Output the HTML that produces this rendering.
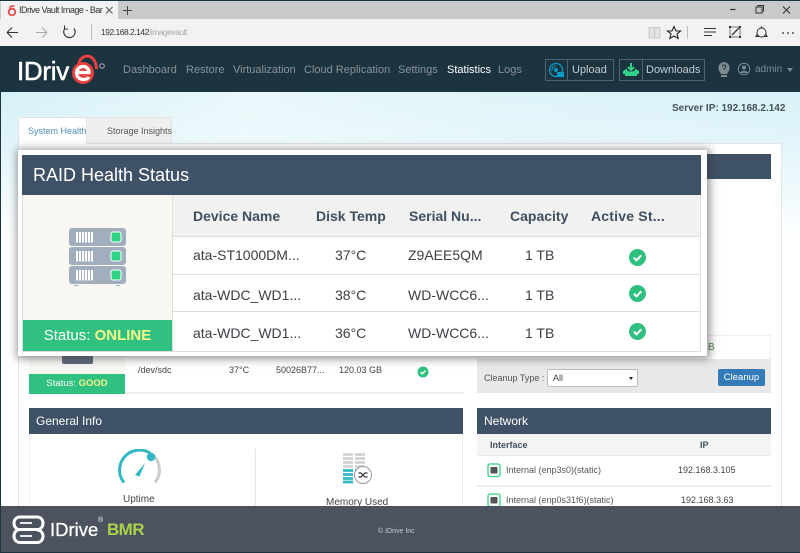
<!DOCTYPE html>
<html><head><meta charset="utf-8"><title>IDrive Vault Image - Bar</title>
<style>
*{box-sizing:border-box}
html,body{margin:0;padding:0;width:800px;height:553px;overflow:hidden;background:#fff;font-family:"Liberation Sans",sans-serif}
.a{position:absolute;white-space:nowrap}
#root{position:relative;width:800px;height:553px;overflow:hidden}
.nav{top:63px;font-size:11px;color:#8b9297;line-height:14px}
.ph{background:#3e5166;color:#fff}
.th{font-weight:bold;font-size:14px;color:#3f4f60;top:208px;line-height:16px}
.td{font-size:14px;color:#3a3f45;line-height:16px}
.sm{font-size:9px;color:#444;line-height:10px}
.line{background:#ddd;height:1px}
</style></head><body><div id="root">
<!-- browser chrome -->
<div class="a" style="left:0;top:0;width:800px;height:1px;background:#1b3440"></div>
<div class="a" style="left:0;top:1px;width:800px;height:18px;background:#c9c9c9"></div>
<div class="a" style="left:1px;top:1px;width:117px;height:18px;background:#f2f2f2"></div>
<svg class="a" style="left:6px;top:4px" width="12" height="13" viewBox="0 0 12 13"><path d="M8.500 2.500A3 3 0 0 0 4 3.500L3.500 7" fill="none" stroke="#e8484a" stroke-width="1.600"/><circle cx="6" cy="8" r="3.300" fill="none" stroke="#e8484a" stroke-width="1.800"/></svg>
<div class="a" style="left:19px;top:4px;font-size:9px;letter-spacing:-.5px;line-height:12px;color:#333">IDrive Vault Image - Bar</div>
<svg class="a" style="left:104px;top:5px" width="10" height="10"><path d="M2 2L8.500 8.500M8.500 2L2 8.500" stroke="#555" stroke-width="1"/></svg>
<svg class="a" style="left:122px;top:5px" width="11" height="11"><path d="M5.500 1V10M1 5.500H10" stroke="#444" stroke-width="1"/></svg>
<svg class="a" style="left:725px;top:3px" width="70" height="13"><path d="M5 6.500H10.500" stroke="#333" stroke-width="1.200"/><rect x="31" y="4" width="6" height="6" fill="none" stroke="#333"/><path d="M33 4V2.500H38.500V8H37" fill="none" stroke="#333"/><path d="M58 3.500L65 10.500M65 3.500L58 10.500" stroke="#333" stroke-width="1.100"/></svg>
<div class="a" style="left:0;top:19px;width:800px;height:27px;background:#f2f2f2"></div>
<svg class="a" style="left:4px;top:24px" width="80" height="17" viewBox="0 0 80 17"><path d="M3 8.500H14M3 8.500L8 3.500M3 8.500L8 13.500" fill="none" stroke="#333" stroke-width="1.100"/><path d="M32 8.500H43M43 8.500L38 3.500M43 8.500L38 13.500" fill="none" stroke="#aaa" stroke-width="1.100"/><path d="M61 4.300A5.700 5.700 0 1 0 70 4.500M60.500 1.500V5H64" fill="none" stroke="#333" stroke-width="1.100"/></svg>
<div class="a" style="left:91px;top:24px;width:1px;height:16px;background:#bbb"></div>
<div class="a" style="left:101px;top:26px;font-size:8.500px;letter-spacing:-.5px;line-height:12px;color:#333">192.168.2.142<span style="color:#aaa">/imagevault</span></div>
<svg class="a" style="left:647px;top:24px" width="150" height="17" viewBox="0 0 150 17"><path d="M2 3.500H7.500V14H2ZM7.500 3.500H13V14H7.500Z" fill="#e4e4e4" stroke="#c8c8c8"/><path d="M27 2.500L29 7H33.500L30 10L31.200 14.500L27 12L22.800 14.500L24 10L20.500 7H25Z" fill="none" stroke="#222" stroke-width="1.100"/><path d="M40.500 2V14.500" stroke="#bbb"/><path d="M57 4.500H69M57 8H69M57 11.500H65" stroke="#333" stroke-width="1.100"/><rect x="83" y="3" width="10" height="10" fill="none" stroke="#777"/><path d="M85 11L92 4" stroke="#333" stroke-width="1.300"/><g fill="#333"><rect x="82" y="2" width="2" height="2"/><rect x="92" y="2" width="2" height="2"/><rect x="82" y="12" width="2" height="2"/><rect x="92" y="12" width="2" height="2"/></g><path d="M114.500 3L120 12.500H109Z" fill="none" stroke="#333" stroke-width="1.100"/><circle cx="114.500" cy="8.500" r="4.500" fill="#f2f2f2" stroke="#333"/><path d="M135 9h2M140 9h2M145 9h2" stroke="#333" stroke-width="1.200"/></svg>
<!-- app header -->
<div class="a" style="left:0;top:46px;width:800px;height:46px;background:#1b3440"></div>
<div class="a" style="left:17px;top:57px;font-size:26px;line-height:28px;color:#fff;letter-spacing:-.3px;-webkit-text-stroke:.5px #fff">IDriv</div>
<svg class="a" style="left:71px;top:52px" width="36" height="36" viewBox="0 0 36 36"><path d="M7.500 13C9 1 25 0 25.500 17" fill="none" stroke="#e8403e" stroke-width="3"/><circle cx="12" cy="21" r="11" fill="#e8403e"/><path d="M6 20.500H18C18 17 15.500 14.500 12 14.500S5.500 17.500 5.500 21 8.500 27.500 12.500 27.500C15 27.500 17 26.500 18 25" fill="none" stroke="#fff" stroke-width="3.200"/><circle cx="31" cy="14" r="2.300" fill="none" stroke="#aab" stroke-width="1"/></svg>
<div class="a nav" style="left:123px">Dashboard</div>
<div class="a nav" style="left:186px">Restore</div>
<div class="a nav" style="left:233px">Virtualization</div>
<div class="a nav" style="left:304px">Cloud Replication</div>
<div class="a nav" style="left:398px">Settings</div>
<div class="a nav" style="left:447px;color:#fff">Statistics</div>
<div class="a nav" style="left:498px">Logs</div>
<div class="a" style="left:545px;top:59px;width:69px;height:22px;border:1px solid #4f636e"></div>
<div class="a" style="left:567px;top:59px;width:1px;height:22px;background:#4f636e"></div>
<svg class="a" style="left:548px;top:62px" width="17" height="17" viewBox="0 0 17 17"><circle cx="8" cy="8" r="6.500" fill="none" stroke="#0a9bc8" stroke-width="1.300"/><circle cx="8" cy="8" r="2" fill="#0a9bc8"/><path d="M4 9A4 4 0 0 1 8 4" stroke="#0a9bc8" fill="none"/><rect x="9" y="10" width="7" height="5" fill="#0a9bc8"/></svg>
<div class="a" style="left:572px;top:63px;font-size:11px;line-height:14px;color:#c4cbcf">Upload</div>
<div class="a" style="left:619px;top:59px;width:86px;height:22px;border:1px solid #4f636e"></div>
<div class="a" style="left:642px;top:59px;width:1px;height:22px;background:#4f636e"></div>
<svg class="a" style="left:622px;top:62px" width="18" height="16" viewBox="0 0 18 16"><path d="M9 1V7M6 5L9 8L12 5" fill="none" stroke="#2fd286" stroke-width="2"/><path d="M1 9L5 6.500V8C5 10 13 10 13 8V6.500L17 9V12H1Z" fill="#2fd286"/><path d="M3 13H15" stroke="#2fd286" stroke-width="2"/></svg>
<div class="a" style="left:646px;top:63px;font-size:11px;line-height:14px;color:#c4cbcf">Downloads</div>
<svg class="a" style="left:716px;top:61px" width="16" height="17" viewBox="0 0 16 17"><path d="M8 1A6 6 0 0 0 4.500 11.500V13H11.500V11.500A6 6 0 0 0 8 1Z" fill="#7d8b91"/><rect x="5" y="14" width="6" height="2" fill="#7d8b91"/><path d="M6.300 5.500C6.300 3.500 9.700 3.500 9.700 5.500C9.700 7 8 7 8 9" fill="none" stroke="#1b3440"/></svg>
<svg class="a" style="left:737px;top:62px" width="14" height="14" viewBox="0 0 14 14"><circle cx="7" cy="7" r="5.700" fill="none" stroke="#7d8b91"/><circle cx="7" cy="5.500" r="2" fill="#7d8b91"/><path d="M3 11C4 8 10 8 11 11Z" fill="#7d8b91"/></svg>
<div class="a" style="left:755px;top:63px;font-size:10px;line-height:13px;color:#7d8b91">admin</div>
<div class="a" style="left:787px;top:68px;border:3.500px solid transparent;border-top:4px solid #7d8b91"></div>
<!-- background -->
<div class="a" style="left:0;top:92px;width:800px;height:150px;background:linear-gradient(to bottom,rgba(255,255,255,0) 0,rgba(255,255,255,.25) 35%,#fff 100%),linear-gradient(100deg,#d6f1f8 0%,#e9f8fb 30%,#dff4f9 60%,#d8f2f9 100%)"></div>
<div class="a" style="left:672px;top:103px;font-size:10px;font-weight:bold;line-height:12px;color:#44525f">Server IP: 192.168.2.142</div>
<div class="a" style="left:18px;top:117px;width:69px;height:27px;background:#fff;border:1px solid #e2e2e2;border-bottom:none"></div>
<div class="a" style="left:87px;top:117px;width:85px;height:27px;background:#efefef;border:1px solid #e2e2e2;border-left:none"></div>
<div class="a" style="left:18px;top:143px;width:764px;height:410px;background:#fff;border:1px solid #e4e4e4"></div>
<div class="a" style="left:19px;top:142px;width:67px;height:3px;background:#fff"></div>
<div class="a" style="left:28px;top:125px;font-size:9px;line-height:12px;color:#4f8fc0">System Health</div>
<div class="a" style="left:107px;top:125px;font-size:9px;line-height:12px;color:#555">Storage Insights</div>
<!-- behind panels -->
<div class="a ph" style="left:477px;top:154px;width:294px;height:25px"></div>
<div class="a" style="left:477px;top:335px;width:294px;height:32px;background:#fff;border:1px solid #eee"></div>
<div class="a" style="left:708px;top:341px;font-size:10px;line-height:13px;color:#3c8a2e">B</div>
<div class="a" style="left:477px;top:359px;width:294px;height:34px;background:#e8e8e8"></div>
<div class="a" style="left:484px;top:372px;font-size:9px;line-height:12px;color:#555">Cleanup Type :</div>
<div class="a" style="left:547px;top:369px;width:91px;height:18px;background:#fff;border:1px solid #bbb;border-radius:2px;font-size:9px;line-height:16px;padding-left:5px;color:#444">All</div>
<div class="a" style="left:629px;top:377px;border:2.500px solid transparent;border-top:3.500px solid #222"></div>
<div class="a" style="left:718px;top:369px;width:47px;height:17px;background:#337ab7;border-radius:2px;color:#fff;font-size:9.500px;line-height:17px;text-align:center">Cleanup</div>
<div class="a" style="left:29px;top:350px;width:435px;height:44px;background:#fff;border-bottom:2px solid #eee"></div>
<div class="a" style="left:29px;top:340px;width:96px;height:34px;background:#f8f7f2"></div>
<div class="a" style="left:62px;top:350px;width:31px;height:14px;background:#5d6a7b;border-radius:0 0 2px 2px"></div>
<div class="a" style="left:29px;top:374px;width:96px;height:20px;background:#30c07f;color:#fff;font-size:9.500px;line-height:20px;text-align:center">Status: <b style="color:#f3f58d">GOOD</b></div>
<div class="a sm" style="left:138px;top:365px">/dev/sdc</div>
<div class="a sm" style="left:229px;top:365px">37°C</div>
<div class="a sm" style="left:276px;top:365px">50026B77...</div>
<div class="a sm" style="left:339px;top:365px">120.03 GB</div>
<svg class="a" style="left:417px;top:366px" width="12" height="12"><circle cx="6" cy="6" r="5.500" fill="#2fbf7e"/><path d="M3.500 6L5.300 7.800L8.500 4.500" fill="none" stroke="#fff" stroke-width="1.400"/></svg>
<div class="a ph" style="left:29px;top:408px;width:434px;height:26px;font-size:12px;line-height:26px;padding-left:7px">General Info</div>
<div class="a" style="left:29px;top:434px;width:434px;height:80px;border:1px solid #eee;border-top:none"></div>
<div class="a" style="left:255px;top:449px;width:1px;height:60px;background:#e6e6e6"></div>
<svg class="a" style="left:117px;top:449px" width="46" height="40" viewBox="0 0 46 40"><path d="M7 33.600A20 20 0 0 1 33.500 4.300" fill="none" stroke="#30b8c4" stroke-width="3"/><path d="M36 6.200A20 20 0 0 1 38 33.600" fill="none" stroke="#ccc" stroke-width="3"/><circle cx="34" cy="8" r="4.200" fill="#30b8c4"/><path d="M28 14L18 26L22.500 27.500Z" fill="#30b8c4"/></svg>
<div class="a" style="left:123px;top:493px;font-size:10px;line-height:13px;color:#444">Uptime</div>
<svg class="a" style="left:342px;top:452px" width="32" height="34" viewBox="0 0 32 34"><path d="M1 2.500H11M13 2.500H23M1 6.500H11M13 6.500H23M1 10.500H11M13 10.500H23M1 14.500H11M13 14.500H23" stroke="#d2d2d2" stroke-width="2.800"/><path d="M1 18.500H11M13 18.500H23M1 22.500H11M1 26.500H11M1 30H11" stroke="#30b8c4" stroke-width="2.800"/><circle cx="21" cy="23" r="8.500" fill="#fff" stroke="#999"/><path d="M16.500 21H19L23 25H25.500M16.500 25H19L23 21H25.500" fill="none" stroke="#333" stroke-width="1.200"/></svg>
<div class="a" style="left:326px;top:496px;font-size:10px;line-height:13px;color:#444">Memory Used</div>
<div class="a ph" style="left:477px;top:408px;width:294px;height:26px;font-size:12px;line-height:26px;padding-left:7px">Network</div>
<div class="a" style="left:477px;top:434px;width:294px;height:22px;background:#f4f4f4;border-bottom:1px solid #e8e8e8"></div>
<div class="a" style="left:490px;top:440px;font-size:9px;font-weight:bold;line-height:11px;color:#3f4f60">Interface</div>
<div class="a" style="left:700px;top:440px;font-size:9px;font-weight:bold;line-height:11px;color:#3f4f60">IP</div>
<div class="a" style="left:477px;top:485px;width:294px;height:2px;background:#f0f0f0"></div>
<svg class="a" style="left:487px;top:463px" width="14" height="45" viewBox="0 0 14 45"><rect x="1" y="1" width="12" height="12.500" rx="2" fill="#fff" stroke="#35d285" stroke-width="1.300"/><rect x="3.500" y="4" width="7" height="6.500" rx="1" fill="#555"/><rect x="1" y="31" width="12" height="12.500" rx="2" fill="#fff" stroke="#35d285" stroke-width="1.300"/><rect x="3.500" y="34" width="7" height="6.500" rx="1" fill="#555"/></svg>
<div class="a" style="left:506px;top:465px;font-size:9px;line-height:11px;color:#555">Internal (enp3s0)(static)</div>
<div class="a" style="left:678px;top:465px;font-size:9px;line-height:11px;color:#444">192.168.3.105</div>
<div class="a" style="left:506px;top:495px;font-size:9px;line-height:11px;color:#555">Internal (enp0s31f6)(static)</div>
<div class="a" style="left:681px;top:495px;font-size:9px;line-height:11px;color:#444">192.168.3.63</div>
<!-- footer -->
<div class="a" style="left:0;top:506px;width:800px;height:46px;background:#4c535e"></div>
<div class="a" style="left:0;top:552px;width:800px;height:1px;background:#1b3440"></div>
<div class="a" style="left:0;top:46px;width:1px;height:507px;background:#1b3440"></div>
<svg class="a" style="left:12px;top:515px" width="34" height="30" viewBox="0 0 34 30"><path d="M8 14.500H25C33 14.500 33 2 25 2H8C0 2 0 14.500 8 14.500C0 14.500 0 27.500 8 27.500H25C33 27.500 33 15 25 15" fill="none" stroke="#fff" stroke-width="3"/><path d="M8 8H20M8 21H20" stroke="#fff" stroke-width="1.800"/></svg>
<div class="a" style="left:50px;top:520px;font-size:18.500px;line-height:20px;color:#fff;-webkit-text-stroke:.3px #fff">IDrive</div>
<div class="a" style="left:98px;top:516px;font-size:7px;line-height:10px;color:#fff">®</div>
<div class="a" style="left:107px;top:520px;font-size:17px;line-height:20px;font-weight:bold;color:#a9d14c;letter-spacing:-.6px">BMR</div>
<div class="a" style="left:378px;top:527px;font-size:7px;line-height:10px;color:#c8ccd0">© IDrive Inc</div>
<!-- modal -->
<div class="a" style="left:18px;top:150px;width:689px;height:206px;background:#fff;box-shadow:1px 1px 8px 2px rgba(60,60,60,.55)"></div>
<div class="a ph" style="left:22px;top:155px;width:679px;height:40px;font-size:18px;line-height:40px;padding-left:11px">RAID Health Status</div>
<div class="a" style="left:22px;top:195px;width:679px;height:157px;border:1px solid #ddd;border-top:none"></div>
<div class="a" style="left:23px;top:195px;width:150px;height:125px;background:#f8f7f2"></div>
<div class="a" style="left:172px;top:195px;width:1px;height:157px;background:#ddd"></div>
<svg class="a" style="left:69px;top:228px" width="58" height="59" viewBox="0 0 58 59"><g id="r1"><rect x="0" y="0" width="57" height="18" rx="3" fill="#a0aebd"/><path d="M8 4V14.500M11 4V14.500M14 4V14.500M17 4V14.500M20 4V14.500M23 4V14.500" stroke="#fff" stroke-width="2"/><rect x="42" y="4" width="10" height="10" rx="2" fill="#30d284" stroke="#fff"/></g><g transform="translate(0 19)"><rect x="0" y="0" width="57" height="18" rx="3" fill="#a0aebd"/><path d="M8 4V14.500M11 4V14.500M14 4V14.500M17 4V14.500M20 4V14.500M23 4V14.500" stroke="#fff" stroke-width="2"/><rect x="42" y="4" width="10" height="10" rx="2" fill="#30d284" stroke="#fff"/></g><g transform="translate(0 38)"><rect x="0" y="0" width="57" height="18" rx="3" fill="#a0aebd"/><path d="M8 4V14.500M11 4V14.500M14 4V14.500M17 4V14.500M20 4V14.500M23 4V14.500" stroke="#fff" stroke-width="2"/><rect x="42" y="4" width="10" height="10" rx="2" fill="#30d284" stroke="#fff"/></g><path d="M5 57.500H9.500M47 57.500H51" stroke="#a0aebd"/></svg>
<div class="a" style="left:23px;top:320px;width:149px;height:31px;background:#30c07f;color:#fff;font-size:15px;line-height:31px;text-align:center">Status: <b style="color:#f6f88a">ONLINE</b></div>
<div class="a" style="left:173px;top:195px;width:527px;height:41px;background:#f1f1f1"></div>
<div class="a line" style="left:173px;top:236px;width:527px"></div>
<div class="a line" style="left:173px;top:274px;width:527px"></div>
<div class="a line" style="left:173px;top:311px;width:527px"></div>
<div class="a th" style="left:193px">Device Name</div>
<div class="a th" style="left:316px">Disk Temp</div>
<div class="a th" style="left:409px">Serial Nu...</div>
<div class="a th" style="left:510px">Capacity</div>
<div class="a th" style="left:591px;letter-spacing:.2px">Active St...</div>
<div class="a td" style="left:193px;top:247px">ata-ST1000DM...</div>
<div class="a td" style="left:335px;top:247px">37°C</div>
<div class="a td" style="left:408px;top:247px">Z9AEE5QM</div>
<div class="a td" style="left:525px;top:247px">1 TB</div>
<div class="a td" style="left:193px;top:287px">ata-WDC_WD1...</div>
<div class="a td" style="left:335px;top:287px">38°C</div>
<div class="a td" style="left:408px;top:287px">WD-WCC6...</div>
<div class="a td" style="left:525px;top:287px">1 TB</div>
<div class="a td" style="left:193px;top:325px">ata-WDC_WD1...</div>
<div class="a td" style="left:335px;top:325px">36°C</div>
<div class="a td" style="left:408px;top:325px">WD-WCC6...</div>
<div class="a td" style="left:525px;top:325px">1 TB</div>
<svg class="a" style="left:629px;top:249px" width="17" height="17"><circle cx="8.500" cy="8.500" r="8.500" fill="#2fbf7e"/><path d="M4.800 8.700L7.500 11.300L12.300 6.300" fill="none" stroke="#fff" stroke-width="2"/></svg>
<svg class="a" style="left:629px;top:285px" width="17" height="17"><circle cx="8.500" cy="8.500" r="8.500" fill="#2fbf7e"/><path d="M4.800 8.700L7.500 11.300L12.300 6.300" fill="none" stroke="#fff" stroke-width="2"/></svg>
<svg class="a" style="left:629px;top:323px" width="17" height="17"><circle cx="8.500" cy="8.500" r="8.500" fill="#2fbf7e"/><path d="M4.800 8.700L7.500 11.300L12.300 6.300" fill="none" stroke="#fff" stroke-width="2"/></svg>
</div></body></html>
